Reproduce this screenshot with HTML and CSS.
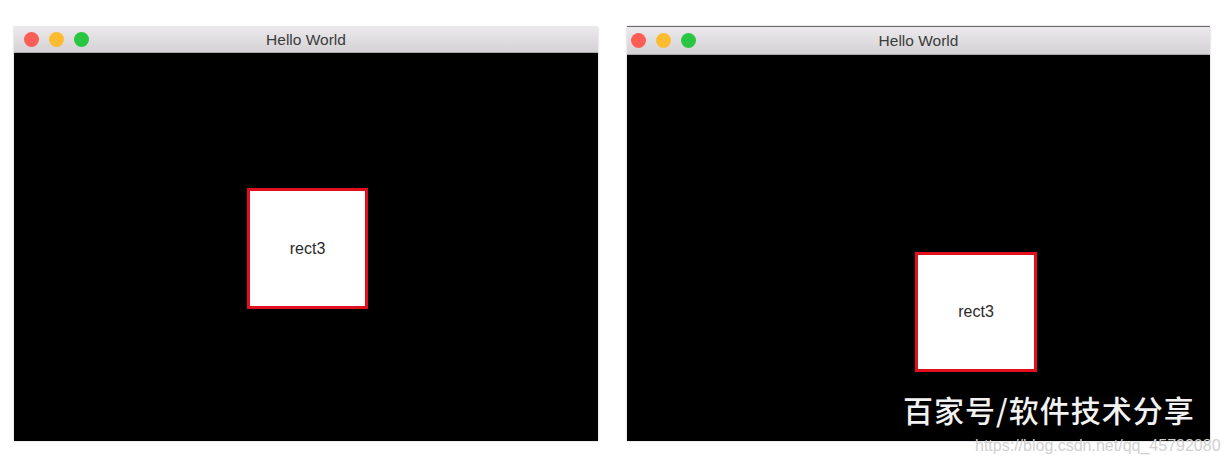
FILE: index.html
```html
<!DOCTYPE html>
<html>
<head>
<meta charset="utf-8">
<link rel="stylesheet" href="styles.css">
</head>
<body>
<div class="page">
  <div class="win win-left">
    <div class="titlebar">
      <div class="lights"><span class="dot red"></span><span class="dot yellow"></span><span class="dot green"></span></div>
      <div class="title">Hello World</div>
    </div>
    <div class="canvas">
      <div class="rect rect-a">rect3</div>
    </div>
  </div>
  <div class="win win-right">
    <div class="titlebar">
      <div class="lights"><span class="dot red"></span><span class="dot yellow"></span><span class="dot green"></span></div>
      <div class="title">Hello World</div>
    </div>
    <div class="canvas">
      <div class="rect rect-b">rect3</div>
    </div>
  </div>
  <div class="mark">百家号/软件技术分享</div>
  <div class="url">https://blog.csdn.net/qq_45792080</div>
</div>
</body>
</html>
```
FILE: styles.css
```css
html, body {
  margin: 0;
  padding: 0;
  background: #ffffff;
}
.page {
  position: relative;
  width: 1229px;
  height: 462px;
  display: flex;
  align-items: flex-start;
  font-family: "Liberation Sans", Arial, sans-serif;
}
.win {
  display: flex;
  flex-direction: column;
  background: #000;
  box-shadow: 0 0 2px rgba(0,0,0,0.25);
}
.win-left {
  margin-left: 14px;
  margin-top: 27px;
  width: 584px;
  height: 414px;
}
.win-right {
  margin-left: 29px;
  margin-top: 26px;
  width: 583px;
  height: 415px;
  border-top: 1px solid #6a6a6a;
  box-sizing: border-box;
}
.titlebar {
  position: relative;
  height: 25px;
  flex: none;
  background: linear-gradient(#ebe9eb, #d4d2d4);
  border-bottom: 1px solid #a9a9a9;
  display: flex;
  align-items: center;
}
.win-right .titlebar {
  height: 27px;
}
.lights {
  display: flex;
  gap: 10px;
  padding-left: 10px;
}
.win-right .lights {
  padding-left: 4px;
}
.dot {
  width: 15px;
  height: 15px;
  border-radius: 50%;
  display: block;
}
.red { background: #fb5d57; }
.yellow { background: #fdbb2f; }
.green { background: #2ac641; }
.title {
  position: absolute;
  left: 0;
  right: 0;
  top: 0;
  bottom: 0;
  display: flex;
  align-items: center;
  justify-content: center;
  font-size: 15.5px;
  color: #3c3c3c;
  padding-top: 1px;
}
.canvas {
  position: relative;
  flex: 1;
  background: #000;
}
.rect {
  position: absolute;
  box-sizing: border-box;
  width: 121px;
  height: 121px;
  background: #fff;
  border: 3px solid #e0101e;
  display: flex;
  align-items: center;
  justify-content: center;
  font-size: 16px;
  color: #2a2a2a;
}
.rect-a {
  left: 233px;
  top: 135px;
}
.rect-b {
  left: 288px;
  top: 197px;
  width: 122px;
  height: 120px;
}
.mark {
  position: absolute;
  left: 903px;
  top: 390px;
  font-family: "Noto Sans CJK SC", "Noto Sans", sans-serif;
  font-size: 30px;
  font-weight: 500;
  line-height: 38px;
  color: #f2f2f2;
  letter-spacing: 1px;
}
.url {
  position: absolute;
  left: 975px;
  top: 437px;
  font-size: 16px;
  line-height: 18px;
  color: #d0d0d0;
}
```
